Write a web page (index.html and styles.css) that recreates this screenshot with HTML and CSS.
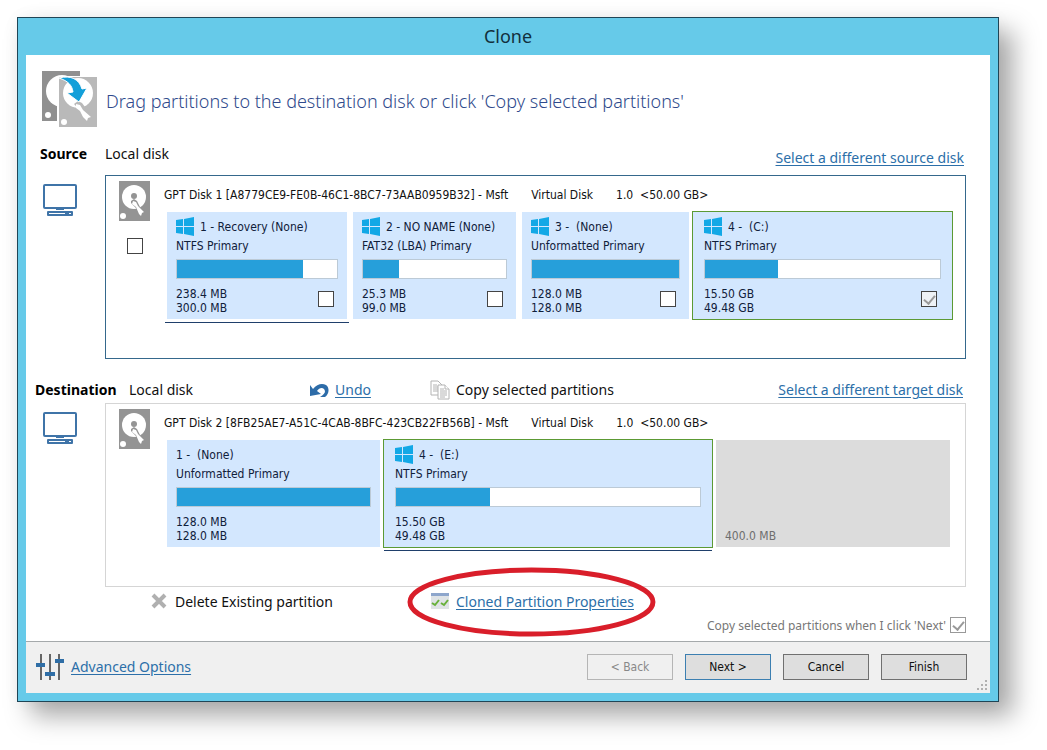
FILE: index.html
```
<!DOCTYPE html>
<html lang="en">
<head>
    <meta charset="UTF-8">
    <meta name="viewport" content="width=device-width, initial-scale=1.0">
    <title>Clone</title>
    <link rel="stylesheet" href="styles.css">
</head>
<body>
    <!-- shared icons -->
    <svg class="sprite" aria-hidden="true">
        <symbol id="disk" viewBox="0 0 31 40">
            <rect width="31" height="40" fill="#949494"/>
            <circle cx="15" cy="16" r="12" fill="#fff"/>
            <circle cx="15" cy="15" r="3" fill="#949494"/>
            <path d="M12 20l3-2 3 2 3 6 4 7-3-1-1 3-4-8-5-5z" fill="#949494"/>
            <path d="M14 20l3 1 2 4 6 6-2 1-1 3-2-2-3-7-4-3z" fill="#fff"/>
            <circle cx="4" cy="35" r="3" fill="#fff"/>
        </symbol>
        <symbol id="monitor" viewBox="0 0 34 33">
            <rect x="1" y="1" width="32" height="23" rx="1" fill="#fff" stroke="#3f74a8" stroke-width="2"/>
            <path d="M13 24h8v2h-8z" fill="#3f74a8"/>
            <rect x="4" y="27" width="26" height="5" rx="1" fill="#3f74a8"/>
            <path d="M6 29h16v1H6zM26 29h2v1h-2z" fill="#fff"/>
        </symbol>
        <symbol id="windows" viewBox="0 0 18 19">
            <path d="M0 3l7-1v7H0zM8 2l10-2v9H8zM0 10h7v7l-7-1zM8 10h10v9L8 17z" fill="#12a8e6"/>
        </symbol>
    </svg>

    <div class="dialog">
        <div class="titlebar">Clone</div>

        <div class="content">
            <div class="intro">
                <svg width="55" height="56" viewBox="0 0 55 56" aria-hidden="true">
                    <path d="M0 0h38v50H0z" fill="#909090"/>
                    <circle cx="20" cy="20" r="16" fill="#fff"/>
                    <circle cx="6" cy="44" r="3" fill="#fff"/>
                    <path d="M15 5h40v51H15z" fill="#fff"/>
                    <path d="M17 6h38v50H17z" fill="#b9b9b9"/>
                    <circle cx="36" cy="22" r="15" fill="#fff"/>
                    <circle cx="22" cy="51" r="3" fill="#fff"/>
                    <path d="M32 33l4-3 4 2 9 12-2 5z" fill="#b9b9b9"/>
                    <path d="M34 33l4 1 3 5 8 7-3 1-1 3-4-4-3-6-4-3z" fill="#fff"/>
                    <path d="M17 7c12-3 20 1 23 11l5-1-8 14-12-9 6-1c-1-7-5-11-14-14z" fill="#129fd9" stroke="#fff"/>
                </svg>
                <h1>Drag partitions to the destination disk or click 'Copy selected partitions'</h1>
            </div>

            <div class="panel-head source-head">
                <b>Source</b>
                <span>Local disk</span>
                <a href="#" class="pick">Select a different source disk</a>
            </div>

            <div class="panel">
                <svg class="computer" width="34" height="33" aria-hidden="true"><use href="#monitor"/></svg>
                <div class="disk disk-active">
                    <div class="disk-side">
                        <svg width="31" height="40" aria-hidden="true"><use href="#disk"/></svg>
                        <input type="checkbox" class="check" aria-label="Select all partitions on disk 1">
                    </div>
                    <div class="disk-main">
                        <div class="disk-name">
                            <span>GPT Disk 1 [A8779CE9-FE0B-46C1-8BC7-73AAB0959B32] - Msft</span>
                            <span>Virtual Disk</span>
                            <span>1.0 &nbsp;&lt;50.00 GB&gt;</span>
                        </div>
                        <div class="partitions source-partitions">
                            <div class="partition focused">
                                <div class="part-title"><svg width="18" height="19" aria-hidden="true"><use href="#windows"/></svg>1 - Recovery (None)</div>
                                <div class="part-type">NTFS Primary</div>
                                <div class="bar"><div class="fill" style="width: 79%"></div></div>
                                <div class="part-foot">
                                    <div>238.4 MB<br>300.0 MB</div>
                                    <input type="checkbox" class="check" aria-label="Recovery (None)">
                                </div>
                            </div>
                            <div class="partition">
                                <div class="part-title"><svg width="18" height="19" aria-hidden="true"><use href="#windows"/></svg>2 - NO NAME (None)</div>
                                <div class="part-type">FAT32 (LBA) Primary</div>
                                <div class="bar"><div class="fill" style="width: 25%"></div></div>
                                <div class="part-foot">
                                    <div>25.3 MB<br>99.0 MB</div>
                                    <input type="checkbox" class="check" aria-label="NO NAME (None)">
                                </div>
                            </div>
                            <div class="partition">
                                <div class="part-title"><svg width="18" height="19" aria-hidden="true"><use href="#windows"/></svg>3 - &nbsp;(None)</div>
                                <div class="part-type">Unformatted Primary</div>
                                <div class="bar"><div class="fill" style="width: 100%"></div></div>
                                <div class="part-foot">
                                    <div>128.0 MB<br>128.0 MB</div>
                                    <input type="checkbox" class="check" aria-label="Partition 3">
                                </div>
                            </div>
                            <div class="partition selected">
                                <div class="part-title"><svg width="18" height="19" aria-hidden="true"><use href="#windows"/></svg>4 - &nbsp;(C:)</div>
                                <div class="part-type">NTFS Primary</div>
                                <div class="bar"><div class="fill" style="width: 31%"></div></div>
                                <div class="part-foot">
                                    <div>15.50 GB<br>49.48 GB</div>
                                    <input type="checkbox" class="check" aria-label="Drive C:" checked>
                                </div>
                            </div>
                        </div>
                    </div>
                </div>
            </div>

            <div class="panel-head dest-head">
                <b>Destination</b>
                <span>Local disk</span>
                <span class="action">
                    <svg width="20" height="14" viewBox="0 0 20 14" aria-hidden="true"><path d="M1 2l3 4c4-5 9-6 13-4 4 3 3 9-1 12h-5c5-3 6-5 4-8-2-2-5-1-7 2l4 3-11 2z" fill="#2d6ca8"/></svg>
                    <a href="#">Undo</a>
                </span>
                <button type="button" class="action text-button">
                    <svg width="20" height="20" viewBox="0 0 20 20" fill="#fff" stroke="#b4b4b4" aria-hidden="true">
                        <path d="M1 1h7l4 4v10H1z"/>
                        <path d="M3 5h4M3 7h5M3 9h5M3 11h5"/>
                        <path d="M8 5h7l4 4v10H8z"/>
                        <path d="M15 5v4h4M10 9h4M10 11h7M10 13h7M10 15h7M10 17h5"/>
                    </svg>
                    Copy selected partitions
                </button>
                <a href="#" class="pick">Select a different target disk</a>
            </div>

            <div class="panel">
                <svg class="computer" width="34" height="33" aria-hidden="true"><use href="#monitor"/></svg>
                <div class="disk">
                    <div class="disk-side">
                        <svg width="31" height="40" aria-hidden="true"><use href="#disk"/></svg>
                    </div>
                    <div class="disk-main">
                        <div class="disk-name">
                            <span>GPT Disk 2 [8FB25AE7-A51C-4CAB-8BFC-423CB22FB56B] - Msft</span>
                            <span>Virtual Disk</span>
                            <span>1.0 &nbsp;&lt;50.00 GB&gt;</span>
                        </div>
                        <div class="partitions dest-partitions">
                            <div class="partition">
                                <div class="part-title">1 - &nbsp;(None)</div>
                                <div class="part-type">Unformatted Primary</div>
                                <div class="bar"><div class="fill" style="width: 100%"></div></div>
                                <div class="part-foot">
                                    <div>128.0 MB<br>128.0 MB</div>
                                </div>
                            </div>
                            <div class="partition selected focused">
                                <div class="part-title"><svg width="18" height="19" aria-hidden="true"><use href="#windows"/></svg>4 - &nbsp;(E:)</div>
                                <div class="part-type">NTFS Primary</div>
                                <div class="bar"><div class="fill" style="width: 31%"></div></div>
                                <div class="part-foot">
                                    <div>15.50 GB<br>49.48 GB</div>
                                </div>
                            </div>
                            <div class="partition free">400.0 MB</div>
                        </div>
                    </div>
                </div>
            </div>

            <div class="actions">
                <button type="button" class="action text-button">
                    <svg width="16" height="16" viewBox="0 0 16 16" aria-hidden="true"><path d="M2 2l12 12M14 2L2 14" stroke="#b0b0b0" stroke-width="4"/></svg>
                    Delete Existing partition
                </button>
                <span class="action circled">
                    <svg width="18" height="16" viewBox="0 0 18 16" aria-hidden="true">
                        <path d="M0 0h18v16H0z" fill="#dfe3e6"/>
                        <path d="M0 0h18v3H0z" fill="#8ea6cc"/>
                        <path d="M1 10l3 2 4-5M10 10l3 2 4-5" fill="none" stroke="#69b13c" stroke-width="2"/>
                    </svg>
                    <a href="#">Cloned Partition Properties</a>
                    <svg class="ring" viewBox="0 0 250 70" preserveAspectRatio="none" aria-hidden="true"><ellipse cx="125" cy="35" rx="122" ry="32" fill="none" stroke="#d91e2a" stroke-width="5"/></svg>
                </span>
            </div>

            <div class="auto-copy">
                <label for="autoCopy">Copy selected partitions when I click 'Next'</label>
                <input type="checkbox" id="autoCopy" class="check" checked disabled>
            </div>
        </div>

        <div class="footer">
            <svg width="28" height="28" viewBox="0 0 28 28" aria-hidden="true">
                <path d="M5 1v26M14 1v26M23 1v26" stroke="#666" stroke-width="2"/>
                <path d="M0 12h9M9 21h10M19 8h9" stroke="#2f6ea6" stroke-width="4"/>
            </svg>
            <a href="#">Advanced Options</a>
            <div class="buttons">
                <button type="button" disabled>&lt; Back</button>
                <button type="button" class="default">Next &gt;</button>
                <button type="button">Cancel</button>
                <button type="button">Finish</button>
            </div>
            <svg class="grip" width="12" height="12" viewBox="0 0 12 12" fill="#b0b0b0" aria-hidden="true"><path d="M9 1h2v2H9zM5 5h2v2H5zM9 5h2v2H9zM1 9h2v2H1zM5 9h2v2H5zM9 9h2v2H9z"/></svg>
        </div>
    </div>
</body>
</html>
```
FILE: styles.css
```
* {
    box-sizing: border-box;
}

body {
    margin: 0;
    padding: 17px 48px 48px 17px;
    background: #fff;
    color: #111;
    font-family: "Noto Sans", "Open Sans", sans-serif;
    font-size: 14px;
}

a {
    color: #2c6fa9;
    text-underline-offset: 2px;
}

svg {
    display: block;
    flex: none;
}

.sprite {
    position: absolute;
    width: 0;
    height: 0;
}

.dialog {
    border: 1px solid #1f4556;
    background: #66cae9;
    padding: 0 8px 8px;
    box-shadow: 14px 14px 24px rgba(0, 0, 0, 0.34), 0 0 16px rgba(0, 0, 0, 0.04);
}

.titlebar {
    height: 37px;
    line-height: 37px;
    text-align: center;
    font-size: 18px;
    color: #12303d;
}

.content {
    background: #fff;
    padding: 16px 24px 8px 0;
}

.intro {
    display: flex;
    align-items: center;
    gap: 9px;
    padding-left: 16px;
}

h1 {
    margin: 0;
    padding-top: 4px;
    font-size: 18px;
    font-weight: 300;
    color: #2f4a8c;
}

/* Rows above each disk */
.panel-head {
    display: flex;
    align-items: center;
    line-height: 20px;
}

.panel-head b {
    color: #000;
}

.source-head {
    padding: 17px 2px 11px 14px;
}

.source-head b {
    width: 65px;
}

.dest-head {
    display: grid;
    grid-template-columns: 94px 180px 121px 1fr auto;
    padding: 21px 3px 3px 9px;
}

.pick {
    margin-left: auto;
}

.source-head .pick {
    padding-top: 4px;
    margin-bottom: -4px;
}

.action {
    display: flex;
    align-items: center;
    gap: 6px;
}

.text-button {
    border: 0;
    padding: 0;
    background: none;
    color: inherit;
    font: inherit;
}

.panel {
    display: grid;
    grid-template-columns: 79px 1fr;
}

.computer {
    margin: 9px 0 0 17px;
}

.disk {
    display: flex;
    border: 1px solid #d5d5d5;
    padding: 5px 15px 39px 13px;
    font-family: "DejaVu Sans Condensed", "Noto Sans", sans-serif;
    font-size: 12px;
}

.disk-active {
    border-color: #35688c;
}

.disk-side {
    display: flex;
    flex-direction: column;
    align-items: center;
    gap: 17px;
    width: 31px;
    margin-right: 14px;
}

.disk-main {
    flex: 1;
    min-width: 0;
}

.disk-name {
    display: flex;
    gap: 23px;
    line-height: 28px;
    height: 31px;
    white-space: nowrap;
}

.partitions {
    display: grid;
    gap: 6px;
    margin-left: 3px;
}

.source-partitions {
    grid-template-columns: 180fr 163fr 167fr 255fr;
}

.dest-partitions {
    grid-template-columns: 213fr 324fr 234fr;
}

.partition {
    position: relative;
    padding: 5px 9px 4px;
    background: #d3e7fe;
    color: #10203a;
    white-space: nowrap;
}

.partition.selected {
    margin: -1px -3px;
    padding: 5px 11px 4px;
    border: 1px solid #5c9a34;
}

.partition.focused::after {
    content: "";
    position: absolute;
    left: -2px;
    right: -2px;
    bottom: -4px;
    height: 1px;
    background: #1f3f6b;
}

.partition.selected.focused::after {
    left: 0;
    right: 0;
}

.partition.free {
    display: flex;
    align-items: flex-end;
    background: #dcdcdc;
    color: #6e6e6e;
    line-height: 14px;
}

.part-title {
    display: flex;
    align-items: center;
    gap: 6px;
    height: 19px;
}

.part-type {
    line-height: 20px;
}

.bar {
    height: 20px;
    margin-top: 3px;
    border: 1px solid #bccad6;
    background: #fff;
}

.fill {
    height: 100%;
    background: #269fda;
}

.part-foot {
    display: flex;
    justify-content: space-between;
    align-items: flex-start;
    margin-top: 8px;
    padding-right: 4px;
    line-height: 14px;
}

.part-foot .check {
    margin-top: 4px;
}

.check {
    appearance: none;
    flex: none;
    width: 16px;
    height: 16px;
    margin: 0;
    border: 1px solid #444;
    background: #fff;
}

.check:checked {
    background: #eef2f6;
}

.check:checked::before {
    content: "";
    display: block;
    width: 5px;
    height: 9px;
    margin: 1px 0 0 4px;
    border: solid #999;
    border-width: 0 2px 2px 0;
    transform: rotate(40deg);
}

.check:disabled {
    border-color: #999;
    background: #fff;
}

.actions {
    display: grid;
    grid-template-columns: 280px 1fr;
    height: 28px;
    margin-bottom: 2px;
    padding-left: 125px;
}

.actions .action {
    gap: 8px;
    justify-self: start;
}

.actions .circled {
    position: relative;
    gap: 7px;
}

.ring {
    position: absolute;
    top: -20px;
    left: -24px;
    width: calc(100% + 46px);
    height: 70px;
    pointer-events: none;
}

.auto-copy {
    display: flex;
    justify-content: flex-end;
    align-items: center;
    gap: 4px;
    height: 16px;
    font-size: 12px;
    color: #777;
}

.footer {
    position: relative;
    display: flex;
    align-items: center;
    gap: 7px;
    height: 52px;
    padding: 0 23px 2px 10px;
    border-top: 1px solid #a5a9ab;
    background: #f0f0f0;
}

.buttons {
    display: flex;
    gap: 12px;
    margin-left: auto;
}

.buttons button {
    width: 86px;
    height: 26px;
    border: 1px solid #707070;
    background: #dedede;
    color: #111;
    font-family: "DejaVu Sans Condensed", "Noto Sans", sans-serif;
    font-size: 12px;
}

.buttons .default {
    border-color: #3c7fb1;
}

.buttons button:disabled {
    border-color: #b5b5b5;
    background: #f0f0f0;
    color: #888;
}

.grip {
    position: absolute;
    right: 2px;
    bottom: 2px;
}
```
